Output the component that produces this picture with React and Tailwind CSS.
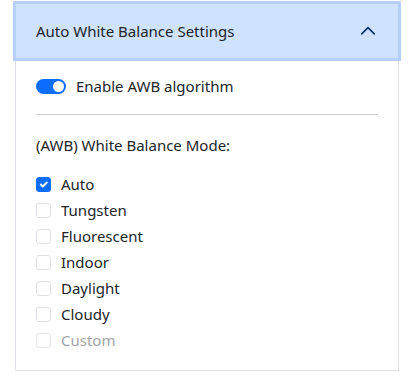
import {useState} from "react";

const modes = ["Auto", "Tungsten", "Fluorescent", "Indoor", "Daylight", "Cloudy", "Custom"]

function ModeCheck({label, checked, disabled}) {
    return (
        <label className={`flex items-center gap-[10px] h-[26px] ${disabled ? "text-[#a3a5a7]" : "text-[#212529]"}`}>
            {checked ? (
                <span className="w-[15px] h-[15px] rounded-[3px] bg-[#0d6efd] border border-[#0d6efd] flex items-center justify-center">
                    <svg viewBox="0 0 20 20" className="w-[13px] h-[13px]">
                        <path d="M6 10l3 3l6-6" fill="none" stroke="#fff" strokeWidth="3" strokeLinecap="round" strokeLinejoin="round"/>
                    </svg>
                </span>
            ) : (
                <span className={`w-[15px] h-[15px] rounded-[3px] border bg-white ${disabled ? "border-[#e6e7e8]" : "border-[#dee2e6]"}`}/>
            )}
            <span>{label}</span>
        </label>
    )
}

export default function App() {
    const [enabled] = useState(true)

    return (
        <div className="w-[409px] h-[375px] bg-white pt-[3px] pl-[12px] pr-[7px] font-['Noto_Sans',sans-serif] text-[15px]">
            <div className="mx-[3px] border border-[#dee2e6] h-[368px]">
                <div className="relative -mx-[3px] -mt-[3px] h-[60px] bg-[#cfe2ff] ring-[3px] ring-inset ring-[#b5d1fb] flex items-center justify-between pl-[23px] pr-[24px]">
                    <span className="text-[#212529]">Auto White Balance Settings</span>
                    <svg viewBox="0 0 16 16" className="w-[18px] h-[18px]">
                        <path d="M2 11l6-6l6 6" fill="none" stroke="#052c65" strokeWidth="1.3"/>
                    </svg>
                </div>
                <div className="px-[20px] pt-[16px]">
                    <div className="flex items-center gap-[10px] h-[18px]">
                        <span className={`w-[30px] h-[15px] rounded-full flex items-center px-[2px] ${enabled ? "bg-[#0d6efd] justify-end" : "bg-white border"}`}>
                            <span className="w-[11px] h-[11px] rounded-full bg-white"/>
                        </span>
                        <span className="text-[#212529]">Enable AWB algorithm</span>
                    </div>
                    <div className="border-t border-[#cfd1d3] mt-[19px] mb-[19px]"/>
                    <div className="text-[#212529] h-[22px] flex items-center">(AWB) White Balance Mode:</div>
                    <div className="flex flex-col mt-[15px]">
                        {modes.map(m => (
                            <ModeCheck key={m} label={m} checked={m === "Auto"} disabled={m === "Custom"}/>
                        ))}
                    </div>
                </div>
            </div>
        </div>
    );
}
